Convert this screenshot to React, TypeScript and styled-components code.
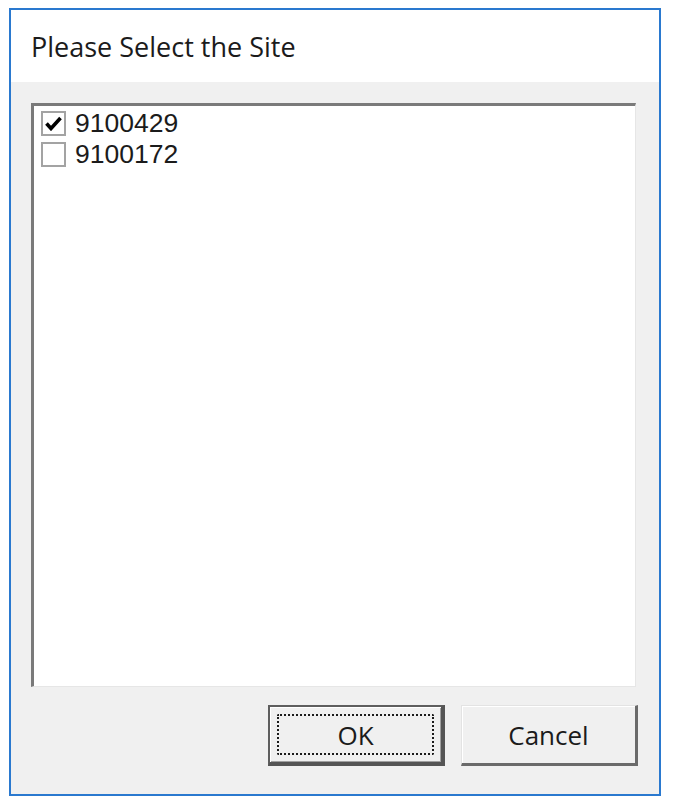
import React, { useState } from 'react'
import styled, { createGlobalStyle, css } from 'styled-components'

const GlobalStyle = createGlobalStyle`
  html, body {
    margin: 0;
    padding: 0;
    background: #ffffff;
  }
`

const Page = styled.div`
  padding: 8px 0 0 9px;
`

const Dialog = styled.div`
  width: 648px;
  height: 784px;
  border: 2px solid #2a79cf;
  background: #f0f0f0;
  display: flex;
  flex-direction: column;
`

const Header = styled.div`
  height: 72px;
  background: #ffffff;
  display: flex;
  align-items: center;
  padding-left: 20px;
`

const Title = styled.h1`
  margin: 0;
  font-family: 'Open Sans', 'Noto Sans', sans-serif;
  font-weight: 400;
  font-size: 27px;
  color: #1b1b1b;
`

const Body = styled.div`
  flex: 1;
  display: flex;
  flex-direction: column;
  padding: 21px 21px 28px 20px;
  gap: 18px;
`

const List = styled.div`
  height: 584px;
  box-sizing: border-box;
  margin-right: 2px;
  background: #ffffff;
  border-style: solid;
  border-width: 3px 1px 1px 3px;
  border-color: #7a7a7a #e6e6e6 #e6e6e6 #7a7a7a;
  padding: 5px 7px;
  display: flex;
  flex-direction: column;
  gap: 6px;
`

const Row = styled.label`
  display: flex;
  align-items: center;
  gap: 9px;
  height: 25px;
  cursor: default;
`

const Box = styled.span`
  width: 25px;
  height: 25px;
  box-sizing: border-box;
  border: 2px solid #a3a3a3;
  background: #ffffff;
  display: flex;
  align-items: center;
  justify-content: center;
`

const ItemText = styled.span`
  font-family: 'Liberation Sans', Arial, sans-serif;
  font-size: 26.5px;
  color: #1b1b1b;
  line-height: 1;
`

const Buttons = styled.div`
  display: flex;
  justify-content: flex-end;
  gap: 16px;
`

const Button = styled.button<{ $default?: boolean }>`
  width: 177px;
  height: 61px;
  box-sizing: border-box;
  position: relative;
  background: #f0f0f0;
  font-family: 'Open Sans', 'Noto Sans', sans-serif;
  font-size: 26px;
  color: #1b1b1b;
  padding: 0;
  border-style: solid;
  ${({ $default }) =>
    $default
      ? css`
          border-width: 2px 4px 4px 2px;
          border-color: #5e5e5e #555555 #555555 #5e5e5e;
          box-shadow: inset 1px 1px 0 #ffffff, inset -1px -1px 0 #a0a0a0;
        `
      : css`
          border-width: 1px 3px 3px 1px;
          border-color: #e3e3e3 #6a6a6a #6a6a6a #e3e3e3;
          box-shadow: inset 1px 1px 0 #ffffff;
        `}
`

const Focus = styled.span`
  position: absolute;
  inset: 7px;
  border: 2px dotted #1b1b1b;
  border-radius: 2px;
`

const Check = () => (
  <svg width="17" height="15" viewBox="0 0 17 15">
    <path d="M1.5 7.5 L6 12.5 L15.5 2" fill="none" stroke="#000" strokeWidth="3.6" strokeLinejoin="miter" />
  </svg>
)

const sites = [
  { id: '9100429', checked: true },
  { id: '9100172', checked: false },
]

export default function App() {
  const [items, setItems] = useState(sites)

  const toggle = (id: string) =>
    setItems((prev) => prev.map((s) => (s.id === id ? { ...s, checked: !s.checked } : s)))

  return (
    <Page>
      <GlobalStyle />
      <Dialog>
        <Header>
          <Title>Please Select the Site</Title>
        </Header>
        <Body>
          <List>
            {items.map((s) => (
              <Row key={s.id} onClick={() => toggle(s.id)}>
                <Box>{s.checked && <Check />}</Box>
                <ItemText>{s.id}</ItemText>
              </Row>
            ))}
          </List>
          <Buttons>
            <Button $default>
              <Focus />
              OK
            </Button>
            <Button>Cancel</Button>
          </Buttons>
        </Body>
      </Dialog>
    </Page>
  )
}
